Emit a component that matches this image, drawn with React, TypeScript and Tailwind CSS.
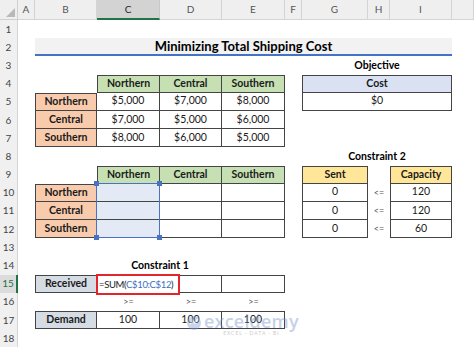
const LINE = 'border-[#444]'

const colHeads: [string, string][] = [
  ['A', 'col-start-2'],
  ['B', 'col-start-3'],
  ['C', 'col-start-4'],
  ['D', 'col-start-5'],
  ['E', 'col-start-6'],
  ['F', 'col-start-7'],
  ['G', 'col-start-8'],
  ['H', 'col-start-9'],
  ['I', 'col-start-10'],
  ['', 'col-start-11'],
]

const rowHeads = [
  'row-start-2', 'row-start-3', 'row-start-4', 'row-start-5', 'row-start-6', 'row-start-7',
  'row-start-8', 'row-start-9', 'row-start-10', 'row-start-11', 'row-start-12', 'row-start-13',
  'row-start-14', 'row-start-15', 'row-start-16', 'row-start-17', 'row-start-18', 'row-start-19',
]

function Cell({ className = '', children }: { className?: string; children?: React.ReactNode }) {
  return (
    <div className={`flex items-center justify-center border-r border-b ${LINE} text-[10.5px] text-[#1a1a1a] ${className}`}>
      {children}
    </div>
  )
}

export default function App() {
  return (
    <div className="relative grid h-[349px] w-[474px] grid-cols-[18px_17px_62px_63px_62px_63px_17px_66px_22px_62px_22px] grid-rows-[20px_repeat(18,18.2px)] overflow-hidden bg-white [font-family:Lato,sans-serif]">
      {/* column header strip */}
      <div className="relative col-start-1 row-start-1 border-r border-b border-[#d0d0d0] bg-[#efefef]">
        <svg className="absolute right-[2px] bottom-[2px]" width="9" height="9" viewBox="0 0 9 9">
          <polygon points="9,0 9,9 0,9" fill="#b9b9b9" />
        </svg>
      </div>
      {colHeads.map(([label, col]) =>
        label === 'C' ? (
          <div key={col} className={`${col} row-start-1 flex items-center justify-center border-r border-b-2 border-r-[#c8c8c8] border-b-[#217346] bg-[#d3d3d3] text-[10px] text-[#262626]`}>
            {label}
          </div>
        ) : (
          <div key={col} className={`${col} row-start-1 flex items-center justify-center border-r border-b border-[#d4d4d4] bg-[#efefef] text-[10px] text-[#555]`}>
            {label}
          </div>
        )
      )}

      {/* row numbers */}
      {rowHeads.map((row, i) =>
        i === 14 ? (
          <div key={row} className={`${row} col-start-1 flex items-center justify-center border-r-2 border-[#217346] bg-[#dcdcdc] text-[10px] text-[#217346]`}>
            {i + 1}
          </div>
        ) : (
          <div key={row} className={`${row} col-start-1 flex items-center justify-center border-r border-[#d4d4d4] bg-[#f0f0f0] text-[10px] text-[#444]`}>
            {i + 1}
          </div>
        )
      )}

      {/* title */}
      <div className="col-start-3 col-span-8 row-start-3 flex items-center justify-center border-b-2 border-[#4472c4] bg-[#f2f2f2] text-[13px] font-bold text-black">
        Minimizing Total Shipping Cost
      </div>

      {/* objective */}
      <div className="col-start-8 col-span-3 row-start-4 flex items-center justify-center text-[10.5px] font-bold">Objective</div>
      <Cell className="col-start-8 col-span-3 row-start-5 border-t border-l bg-[#d9e1f2] font-bold">Cost</Cell>
      <Cell className="col-start-8 col-span-3 row-start-6 border-l">$0</Cell>

      {/* cost table */}
      <Cell className="col-start-4 row-start-5 border-t border-l bg-[#c6e0b4] font-bold">Northern</Cell>
      <Cell className="col-start-5 row-start-5 border-t bg-[#c6e0b4] font-bold">Central</Cell>
      <Cell className="col-start-6 row-start-5 border-t bg-[#c6e0b4] font-bold">Southern</Cell>

      <Cell className="col-start-3 row-start-6 border-t border-l bg-[#f8cbad] font-bold">Northern</Cell>
      <Cell className="col-start-4 row-start-6">$5,000</Cell>
      <Cell className="col-start-5 row-start-6">$7,000</Cell>
      <Cell className="col-start-6 row-start-6">$8,000</Cell>

      <Cell className="col-start-3 row-start-7 border-l bg-[#f8cbad] font-bold">Central</Cell>
      <Cell className="col-start-4 row-start-7">$7,000</Cell>
      <Cell className="col-start-5 row-start-7">$5,000</Cell>
      <Cell className="col-start-6 row-start-7">$6,000</Cell>

      <Cell className="col-start-3 row-start-8 border-l bg-[#f8cbad] font-bold">Southern</Cell>
      <Cell className="col-start-4 row-start-8">$8,000</Cell>
      <Cell className="col-start-5 row-start-8">$6,000</Cell>
      <Cell className="col-start-6 row-start-8">$5,000</Cell>

      {/* constraint 2 */}
      <div className="col-start-8 col-span-3 row-start-9 flex items-center justify-center text-[10.5px] font-bold">Constraint 2</div>
      <Cell className="col-start-8 row-start-10 border-t border-l bg-[#ffe699] font-bold">Sent</Cell>
      <Cell className="col-start-10 row-start-10 border-t border-l bg-[#ffe699] font-bold">Capacity</Cell>
      {['row-start-11', 'row-start-12', 'row-start-13'].map((row, i) => (
        <div key={row} className="contents">
          <Cell className={`${row} col-start-8 border-l`}>0</Cell>
          <div className={`${row} col-start-9 flex items-center justify-center text-[9px] text-[#555]`}>&lt;=</div>
          <Cell className={`${row} col-start-10 border-l`}>{['120', '120', '60'][i]}</Cell>
        </div>
      ))}

      {/* shipment table */}
      <Cell className="col-start-4 row-start-10 border-t border-l bg-[#c6e0b4] font-bold">Northern</Cell>
      <Cell className="col-start-5 row-start-10 border-t bg-[#c6e0b4] font-bold">Central</Cell>
      <Cell className="col-start-6 row-start-10 border-t bg-[#c6e0b4] font-bold">Southern</Cell>

      <Cell className="col-start-3 row-start-11 border-t border-l bg-[#f8cbad] font-bold">Northern</Cell>
      <Cell className="col-start-4 row-start-11 bg-[#e4eaf5]" />
      <Cell className="col-start-5 row-start-11" />
      <Cell className="col-start-6 row-start-11" />
      <Cell className="col-start-3 row-start-12 border-l bg-[#f8cbad] font-bold">Central</Cell>
      <Cell className="col-start-4 row-start-12 bg-[#e4eaf5]" />
      <Cell className="col-start-5 row-start-12" />
      <Cell className="col-start-6 row-start-12" />
      <Cell className="col-start-3 row-start-13 border-l bg-[#f8cbad] font-bold">Southern</Cell>
      <Cell className="col-start-4 row-start-13 bg-[#e4eaf5]" />
      <Cell className="col-start-5 row-start-13" />
      <Cell className="col-start-6 row-start-13" />

      {/* referenced range C10:C12 */}
      <div className="relative z-10 col-start-4 row-start-11 row-span-3 -mt-px -ml-px border-[1.5px] border-[#4a72c0]">
        <span className="absolute -top-[3px] -left-[3px] h-[5px] w-[5px] bg-[#4a72c0]" />
        <span className="absolute -top-[3px] -right-[3px] h-[5px] w-[5px] bg-[#4a72c0]" />
        <span className="absolute -bottom-[3px] -left-[3px] h-[5px] w-[5px] bg-[#4a72c0]" />
        <span className="absolute -right-[3px] -bottom-[3px] h-[5px] w-[5px] bg-[#4a72c0]" />
      </div>

      {/* constraint 1 */}
      <div className="col-start-3 col-span-4 row-start-15 flex items-center justify-center text-[10.5px] font-bold">Constraint 1</div>
      <Cell className="col-start-3 row-start-16 border-t border-l bg-[#d6dce4] font-bold">Received</Cell>
      <div className={`relative z-10 col-start-4 row-start-16 border-t border-b ${LINE}`}>
        <div className="absolute -top-[2px] -left-px h-[21px] w-[84px] border-2 border-[#e3242b] bg-white pl-[1px] text-[9.5px] leading-[17px] tracking-[-0.35px] whitespace-nowrap text-[#1a1a1a]">
          =SUM(<span className="text-[#3c6fc4]">C$10:C$12</span>)
        </div>
      </div>
      <Cell className="col-start-5 row-start-16 border-t" />
      <Cell className="col-start-6 row-start-16 border-t" />

      <div className="col-start-4 row-start-17 flex items-center justify-center text-[9px] text-[#555]">&gt;=</div>
      <div className="col-start-5 row-start-17 flex items-center justify-center text-[9px] text-[#555]">&gt;=</div>
      <div className="col-start-6 row-start-17 flex items-center justify-center text-[9px] text-[#555]">&gt;=</div>

      <Cell className="col-start-3 row-start-18 border-t border-l bg-[#d6dce4] font-bold">Demand</Cell>
      <Cell className="col-start-4 row-start-18 border-t">100</Cell>
      <Cell className="col-start-5 row-start-18 border-t">100</Cell>
      <Cell className="col-start-6 row-start-18 border-t">100</Cell>

      {/* watermark */}
      <div className="pointer-events-none absolute top-[312px] left-[186px] flex items-start gap-[2px] opacity-40">
        <svg width="16" height="16" viewBox="0 0 16 16" className="mt-[3px]">
          <circle cx="8" cy="8" r="7" fill="#7d9bd0" />
          <path d="M4 9 L7 5 L9 8 L12 4" stroke="#fff" strokeWidth="1.5" fill="none" />
        </svg>
        <div className="flex flex-col items-center leading-none">
          <span className="text-[18px] font-semibold tracking-[0.2px] text-[#6f8fc8] [font-family:'Open_Sans',sans-serif]">exceldemy</span>
          <span className="mt-[1px] text-[5px] tracking-[1px] text-[#7a7a7a]">EXCEL · DATA · BI</span>
        </div>
      </div>
    </div>
  )
}
